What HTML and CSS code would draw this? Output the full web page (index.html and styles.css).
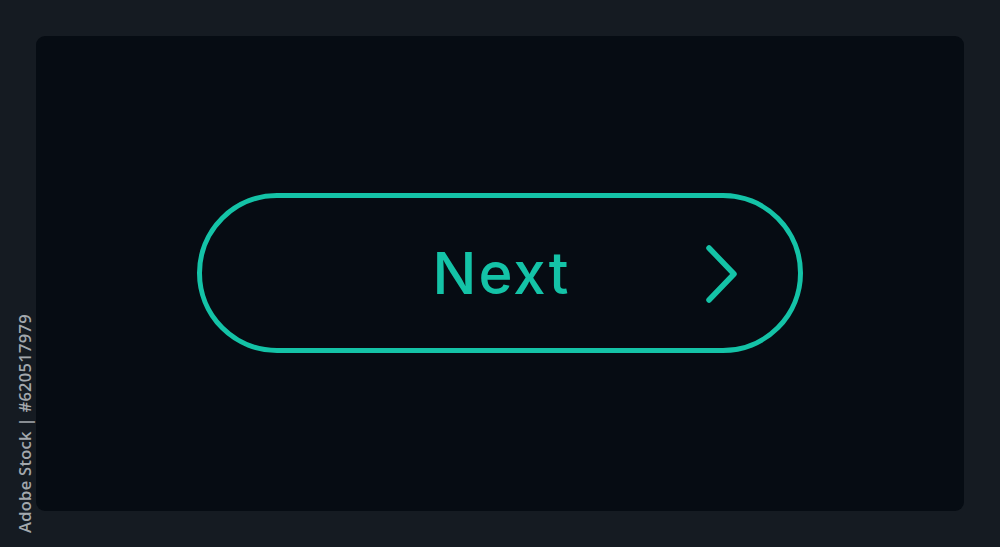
FILE: index.html
```html
<!DOCTYPE html>
<html lang="en">
<head>
<meta charset="utf-8">
<title>Next button</title>
<link rel="stylesheet" href="styles.css">
</head>
<body>
<main class="frame">
  <section class="panel">
    <button class="next-btn" type="button">
      <span class="next-label">Next</span>
      <svg class="next-icon" width="34" height="60" viewBox="0 0 34 60" aria-hidden="true">
        <path d="M4 4 L29 30 L4 56" fill="none" stroke="currentColor" stroke-width="5.5" stroke-linecap="round" stroke-linejoin="round"/>
      </svg>
    </button>
  </section>
  <p class="credit">Adobe Stock | #620517979</p>
</main>
</body>
</html>
```

FILE: styles.css
```css
* { box-sizing: border-box; }

html, body {
  margin: 0;
  height: 100%;
}

body {
  background: #151b22;
  font-family: "Open Sans", "Noto Sans", sans-serif;
}

.frame {
  position: relative;
  height: 547px;
  padding: 36px;
}

.panel {
  height: 475px;
  background: #060c13;
  border-radius: 9px;
  display: flex;
  align-items: center;
  justify-content: center;
}

.next-btn {
  width: 606px;
  height: 160px;
  margin-top: -1px;
  border: 5px solid #14c3a7;
  border-radius: 80px;
  background: transparent;
  color: #14c3a7;
  display: grid;
  grid-template-columns: 1fr auto 1fr;
  align-items: center;
  padding: 0 59px 0 0;
  cursor: pointer;
}

.next-label {
  grid-column: 2;
  font-family: Inter, "Noto Sans", sans-serif;
  font-weight: 500;
  font-size: 58px;
  letter-spacing: 2px;
  line-height: 1;
  margin: 0 0 0 62px;
}

.next-icon {
  grid-column: 3;
  justify-self: end;
  margin-top: 2px;
}

.credit {
  position: absolute;
  left: 13px;
  bottom: 14px;
  margin: 0;
  writing-mode: vertical-rl;
  transform: rotate(180deg);
  color: #a3a8ad;
  font-size: 16.5px;
  font-weight: 600;
  letter-spacing: 0.3px;
}
```
